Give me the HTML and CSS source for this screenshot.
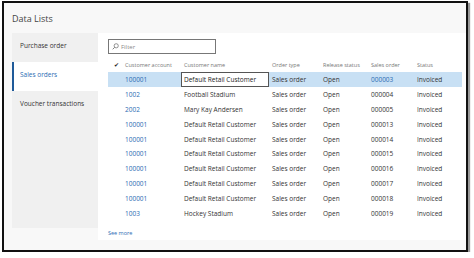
FILE: index.html
```html
<!DOCTYPE html>
<html lang="en">
<head>
    <meta charset="UTF-8">
    <title>Data Lists</title>
    <link rel="stylesheet" href="styles.css">
</head>
<body>
    <div class="frame">
        <div class="title">Data Lists</div>
        <div class="main">
            <div class="nav">
                <div class="nav-item">Purchase order</div>
                <div class="nav-item active">Sales orders</div>
                <div class="nav-item">Voucher transactions</div>
            </div>
            <div class="content">
                <div class="filter">
                    <svg class="search" width="7" height="7" viewBox="0 0 10 10">
                        <circle cx="6" cy="4" r="3" fill="none" stroke="#666" stroke-width="1"/>
                        <line x1="3.8" y1="6.2" x2="1" y2="9" stroke="#666" stroke-width="1.2"/>
                    </svg>
                    <span>Filter</span>
                </div>
                <div class="grid">
                    <div class="row head">
                        <div class="cell check">&#10004;</div>
                        <div class="cell">Customer account</div>
                        <div class="cell">Customer name</div>
                        <div class="cell">Order type</div>
                        <div class="cell">Release status</div>
                        <div class="cell">Sales order</div>
                        <div class="cell">Status</div>
                    </div>
                    <div class="row selected">
                        <div class="cell check"></div>
                        <div class="cell link">100001</div>
                        <div class="cell"><span class="edit">Default Retail Customer</span></div>
                        <div class="cell">Sales order</div>
                        <div class="cell">Open</div>
                        <div class="cell link">000003</div>
                        <div class="cell">Invoiced</div>
                    </div>
                    <div class="row">
                        <div class="cell check"></div>
                        <div class="cell link">1002</div>
                        <div class="cell">Football Stadium</div>
                        <div class="cell">Sales order</div>
                        <div class="cell">Open</div>
                        <div class="cell">000004</div>
                        <div class="cell">Invoiced</div>
                    </div>
                    <div class="row">
                        <div class="cell check"></div>
                        <div class="cell link">2002</div>
                        <div class="cell">Mary Kay Andersen</div>
                        <div class="cell">Sales order</div>
                        <div class="cell">Open</div>
                        <div class="cell">000005</div>
                        <div class="cell">Invoiced</div>
                    </div>
                    <div class="row">
                        <div class="cell check"></div>
                        <div class="cell link">100001</div>
                        <div class="cell">Default Retail Customer</div>
                        <div class="cell">Sales order</div>
                        <div class="cell">Open</div>
                        <div class="cell">000013</div>
                        <div class="cell">Invoiced</div>
                    </div>
                    <div class="row">
                        <div class="cell check"></div>
                        <div class="cell link">100001</div>
                        <div class="cell">Default Retail Customer</div>
                        <div class="cell">Sales order</div>
                        <div class="cell">Open</div>
                        <div class="cell">000014</div>
                        <div class="cell">Invoiced</div>
                    </div>
                    <div class="row">
                        <div class="cell check"></div>
                        <div class="cell link">100001</div>
                        <div class="cell">Default Retail Customer</div>
                        <div class="cell">Sales order</div>
                        <div class="cell">Open</div>
                        <div class="cell">000015</div>
                        <div class="cell">Invoiced</div>
                    </div>
                    <div class="row">
                        <div class="cell check"></div>
                        <div class="cell link">100001</div>
                        <div class="cell">Default Retail Customer</div>
                        <div class="cell">Sales order</div>
                        <div class="cell">Open</div>
                        <div class="cell">000016</div>
                        <div class="cell">Invoiced</div>
                    </div>
                    <div class="row">
                        <div class="cell check"></div>
                        <div class="cell link">100001</div>
                        <div class="cell">Default Retail Customer</div>
                        <div class="cell">Sales order</div>
                        <div class="cell">Open</div>
                        <div class="cell">000017</div>
                        <div class="cell">Invoiced</div>
                    </div>
                    <div class="row">
                        <div class="cell check"></div>
                        <div class="cell link">100001</div>
                        <div class="cell">Default Retail Customer</div>
                        <div class="cell">Sales order</div>
                        <div class="cell">Open</div>
                        <div class="cell">000018</div>
                        <div class="cell">Invoiced</div>
                    </div>
                    <div class="row">
                        <div class="cell check"></div>
                        <div class="cell link">1003</div>
                        <div class="cell">Hockey Stadium</div>
                        <div class="cell">Sales order</div>
                        <div class="cell">Open</div>
                        <div class="cell">000019</div>
                        <div class="cell">Invoiced</div>
                    </div>
                </div>
                <div class="see-more">See more</div>
            </div>
        </div>
    </div>
</body>
</html>
```

FILE: styles.css
```css
body {
    margin: 0;
    background: #fff;
    font-family: 'Open Sans', 'Noto Sans', sans-serif;
    color: #333;
}
.frame {
    width: 462px;
    height: 247px;
    margin: 1px 0 0 2px;
    border: 2px solid #111;
    box-shadow: 2px 2px 1px #999;
    background: #f8f8f8;
    display: flex;
    flex-direction: column;
}
.title {
    height: 30px;
    padding-left: 8px;
    font-size: 9px;
    line-height: 32px;
    color: #444;
}
.main {
    display: flex;
    align-items: flex-start;
    height: 207px;
}
.nav {
    width: 86px;
    height: 195px;
    margin-left: 8px;
    background: #f0f0f0;
    display: flex;
    flex-direction: column;
}
.nav-item {
    height: 29px;
    padding-left: 8px;
    font-size: 6.5px;
    line-height: 25px;
    color: #333;
}
.nav-item.active {
    background: #fff;
    color: #2b6cb3;
    border-left: 2px solid #1f5a99;
    padding-left: 6px;
}
.content {
    flex: 1;
    align-self: stretch;
    background: #fff;
    padding: 6px 0 0 10px;
    display: flex;
    flex-direction: column;
}
.filter {
    width: 103px;
    height: 13px;
    border: 1px solid #777;
    display: flex;
    align-items: center;
    gap: 2px;
    padding-left: 3px;
    font-size: 6px;
    color: #888;
}
.grid {
    margin-top: 3px;
    width: 354px;
}
.row {
    display: grid;
    grid-template-columns: 14px 59px 88px 51px 48px 46px 48px;
    height: 14.9px;
    align-items: center;
    font-size: 6.5px;
}
.row.head {
    height: 15px;
    font-size: 5.5px;
    color: #777;
}
.row.selected {
    background: #c8e0f4;
}
.cell {
    padding-left: 3px;
    white-space: nowrap;
}
.check {
    padding-left: 6px;
    color: #222;
    font-size: 6px;
}
.link {
    color: #2b6cb3;
}
.edit {
    display: inline-block;
    margin-left: -3px;
    width: 82px;
    padding: 2px 2px;
    background: #fff;
    border: 1px solid #555;
    color: #222;
}
.see-more {
    margin-top: 8px;
    font-size: 5.5px;
    color: #2b6cb3;
}
```
